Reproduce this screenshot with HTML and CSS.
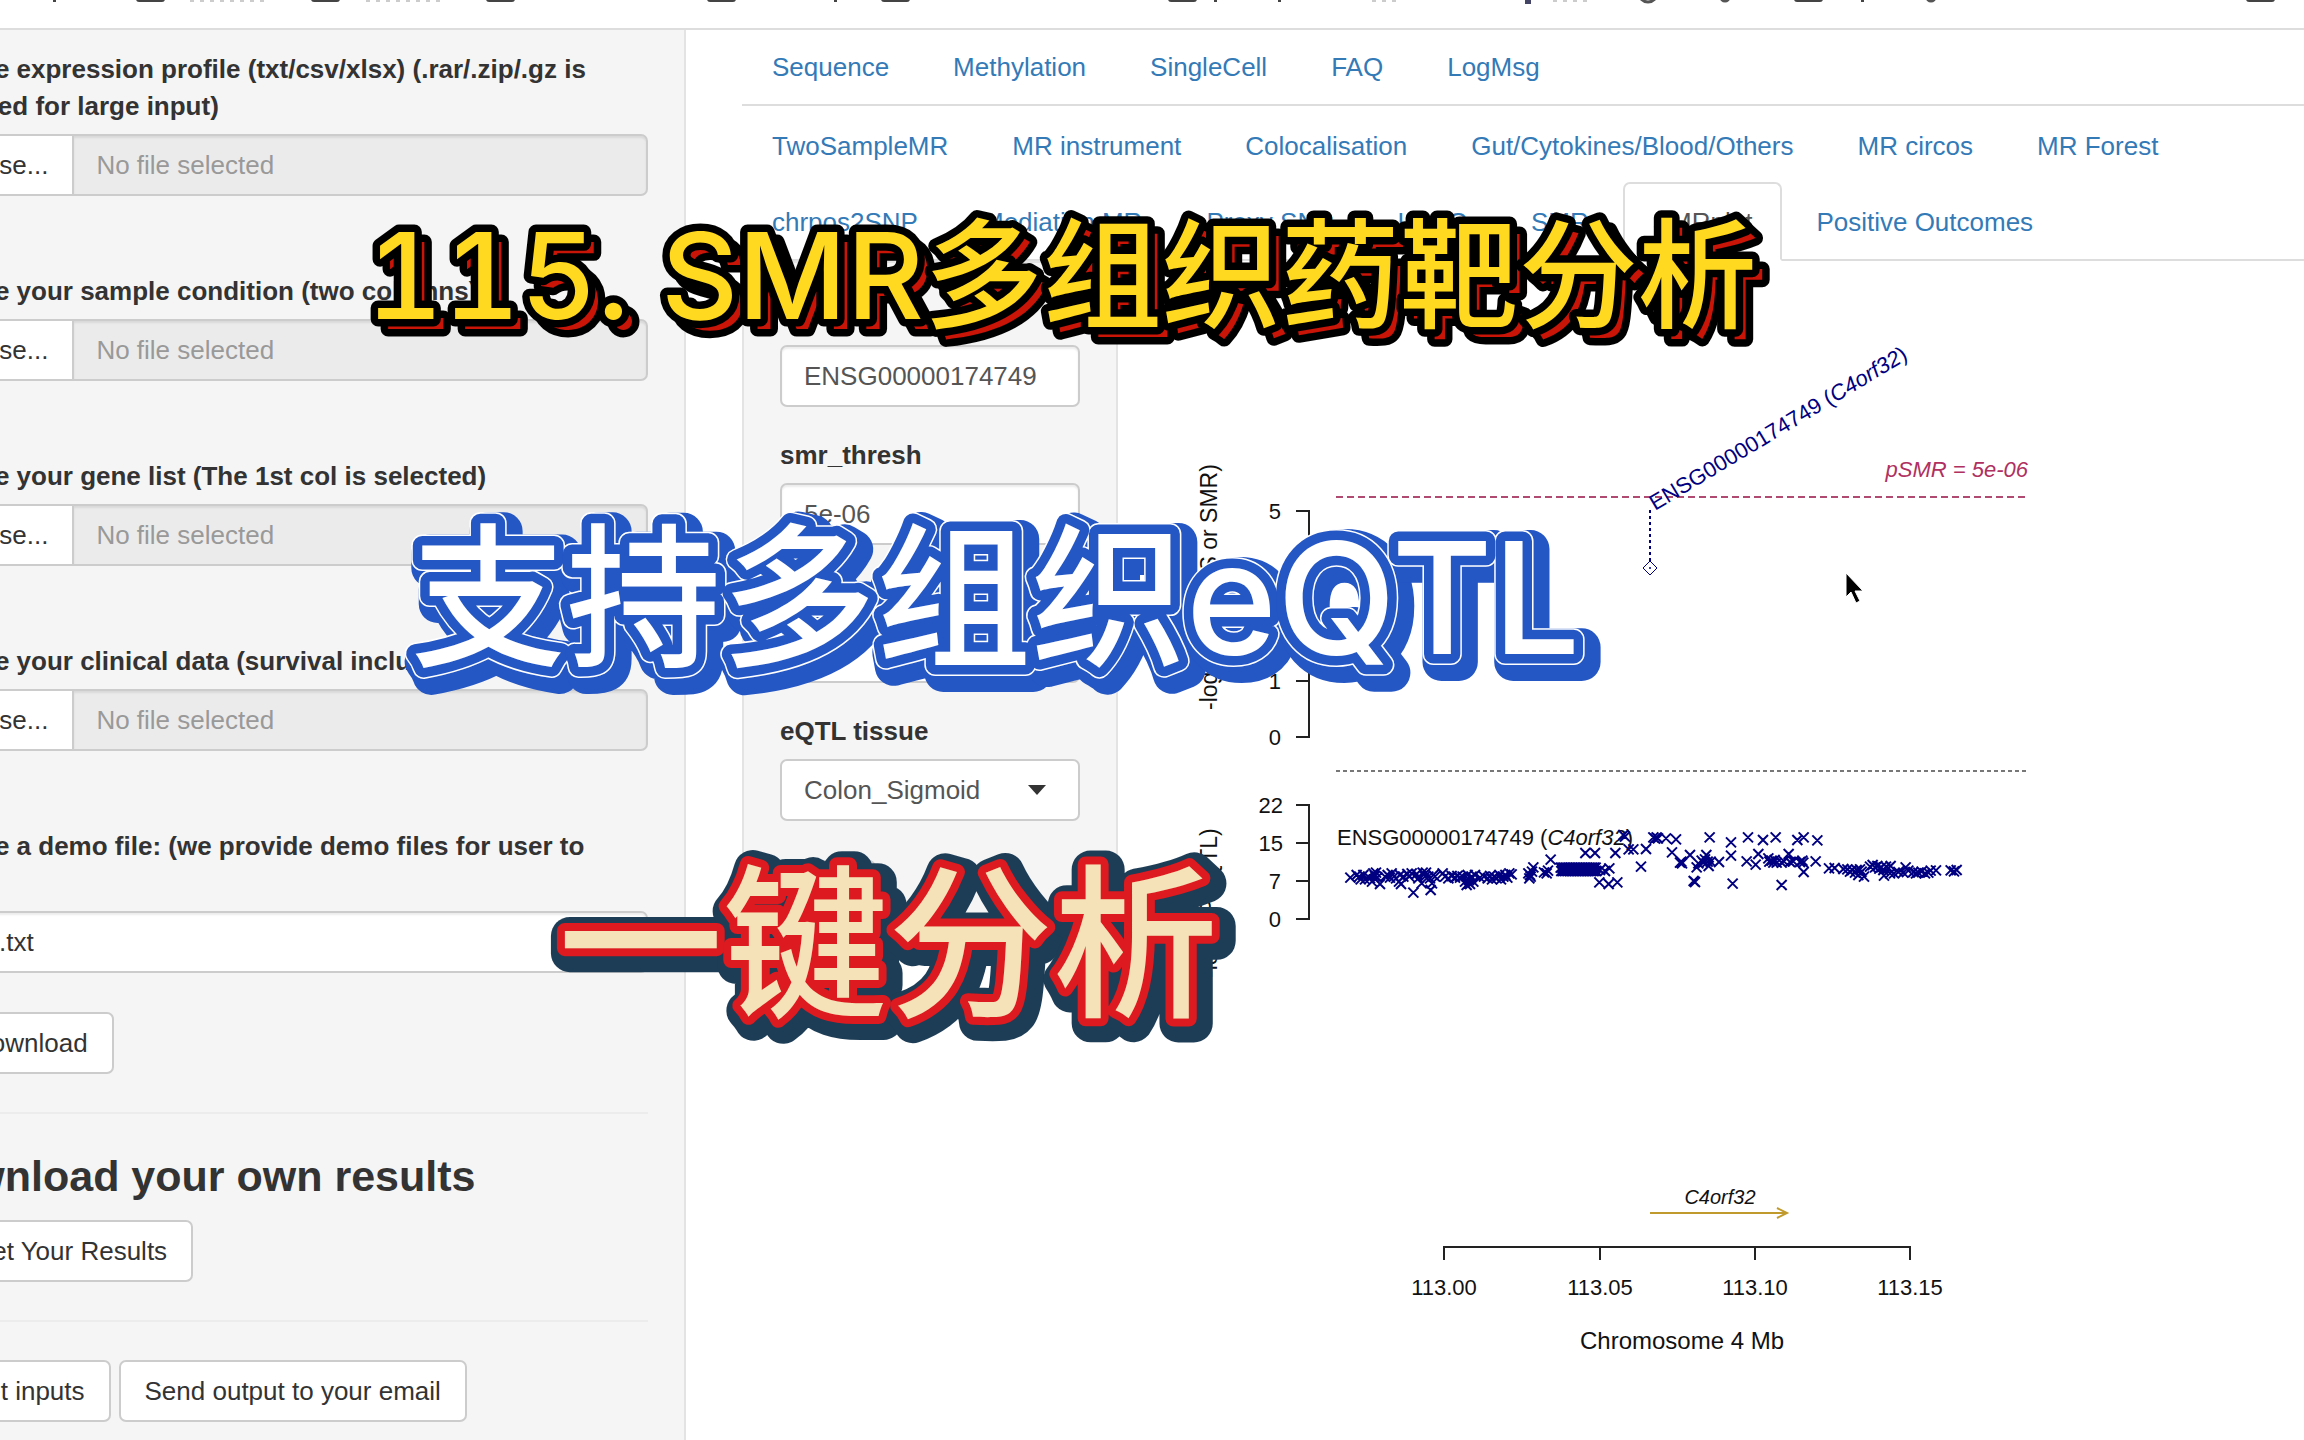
FILE: index.html
```html
<!DOCTYPE html>
<html lang="en">
<head>
  <meta charset="UTF-8" />
  <meta name="viewport" content="width=device-width, initial-scale=1.0"/>
  <title>SMR plot</title>
  <link rel="stylesheet" href="styles.css">
</head>
<body>

  <header class="bookmarks">
    <svg class="bookmark-icons" width="2304" height="4" aria-hidden="true">
      <g fill="#444">
        <rect x="136" y="-8" width="29" height="10" rx="3"/>
        <rect x="311" y="-8" width="29" height="10" rx="3"/>
        <rect x="486" y="-8" width="29" height="10" rx="3"/>
        <rect x="707" y="-8" width="29" height="10" rx="3"/>
        <rect x="881" y="-8" width="29" height="10" rx="3"/>
        <rect x="1168" y="-8" width="29" height="10" rx="3"/>
        <rect x="1794" y="-8" width="29" height="10" rx="3"/>
        <rect x="2246" y="-8" width="29" height="10" rx="3"/>
        <rect x="53" y="0" width="3" height="2"/>
        <rect x="834" y="0" width="3" height="2"/>
        <rect x="1214" y="0" width="3" height="2"/>
        <rect x="1278" y="0" width="3" height="2"/>
        <rect x="1861" y="0" width="3" height="2"/>
      </g>
      <g fill="none" stroke="#555" stroke-width="3">
        <circle cx="1648" cy="-7" r="9"/>
        <circle cx="1725" cy="-3" r="4"/>
        <circle cx="1931" cy="-3" r="4"/>
      </g>
      <rect x="1525" y="0" width="6" height="4" fill="#446"/>
      <path d="M190 1h75M366 1h75M1372 1h24M1553 1h34" stroke="#ccc" stroke-width="2" stroke-dasharray="4 6"/>
    </svg>
  </header>

  <div class="page">
    <aside class="sidebar">
      <div class="field">
        <label for="expr">Choose expression profile (txt/csv/xlsx) (.rar/.zip/.gz is<br>preferred for large input)</label>
        <div class="file-group">
          <button type="button" class="btn">Browse...</button>
          <input id="expr" type="text" placeholder="No file selected" readonly>
        </div>
      </div>
      <div class="field">
        <label for="cond">Choose your sample condition (two columns)</label>
        <div class="file-group">
          <button type="button" class="btn">Browse...</button>
          <input id="cond" type="text" placeholder="No file selected" readonly>
        </div>
      </div>
      <div class="field">
        <label for="genes">Choose your gene list (The 1st col is selected)</label>
        <div class="file-group">
          <button type="button" class="btn">Browse...</button>
          <input id="genes" type="text" placeholder="No file selected" readonly>
        </div>
      </div>
      <div class="field">
        <label for="clin">Choose your clinical data (survival included)</label>
        <div class="file-group">
          <button type="button" class="btn">Browse...</button>
          <input id="clin" type="text" placeholder="No file selected" readonly>
        </div>
      </div>
      <div class="field demo">
        <label for="demo">Choose a demo file: (we provide demo files for user to<br>test)</label>
        <input id="demo" class="control" type="text" value="demo.txt">
      </div>
      <button type="button" class="btn"><svg class="icon" viewBox="0 0 16 16"><path d="M8 1v9M4 7l4 4 4-4M1 14h14"/></svg>Download</button>
      <hr>
      <h3>Download your own results</h3>
      <button type="button" class="btn"><svg class="icon" viewBox="0 0 16 16"><path d="M8 1v9M4 7l4 4 4-4M1 14h14"/></svg>Get Your Results</button>
      <hr>
      <div class="actions">
        <button type="button" class="btn">Reset inputs</button>
        <button type="button" class="btn">Send output to your email</button>
      </div>
    </aside>

    <main class="main">
      <nav class="tabs">
        <a href="#sequence">Sequence</a>
        <a href="#methylation">Methylation</a>
        <a href="#singlecell">SingleCell</a>
        <a href="#faq">FAQ</a>
        <a href="#logmsg">LogMsg</a>
      </nav>
      <nav class="tabs sub">
        <a href="#twosamplemr">TwoSampleMR</a>
        <a href="#instrument">MR instrument</a>
        <a href="#coloc">Colocalisation</a>
        <a href="#gut">Gut/Cytokines/Blood/Others</a>
        <a href="#circos">MR circos</a>
        <a href="#forest">MR Forest</a>
        <span class="break"></span>
        <a href="#chrpos">chrpos2SNP</a>
        <a href="#mediation">Mediation MR</a>
        <a href="#proxy">Proxy SNP</a>
        <a href="#ldsc">LDSC</a>
        <a href="#smr">SMR</a>
        <a href="#smrplot" class="active">SMRplot</a>
        <a href="#outcomes">Positive Outcomes</a>
      </nav>

      <div class="content">
        <form class="well">
          <div class="param">
            <label for="probe">&nbsp;</label>
            <input id="probe" class="control" type="text" value="ENSG00000174749" aria-label="Probe">
          </div>
          <div class="param">
            <label for="smr">smr_thresh</label>
            <input id="smr" class="control" type="text" value="5e-06">
          </div>
          <div class="param">
            <label for="heidi">&nbsp;</label>
            <input id="heidi" class="control" type="text" aria-label="Second threshold">
          </div>
          <div class="param">
            <label for="tissue">eQTL tissue</label>
            <select id="tissue" class="control">
              <option>Colon_Sigmoid</option>
            </select>
          </div>
          <button type="button" class="btn run" aria-label="Run"></button>
        </form>

        <svg class="plot" viewBox="1171 261 920 1120" role="img" aria-label="SMR plot for C4orf32">
          <!-- SMR panel -->
          <path class="axis" d="M1296 511H1309V737H1296M1296 568H1309M1296 624H1309M1296 681H1309"/>
          <g class="ticks end">
            <text x="1281" y="519">5</text>
            <text x="1281" y="689">1</text>
            <text x="1281" y="745">0</text>
          </g>
          <text class="ylab" transform="translate(1217 710) rotate(-90)">-log<tspan class="small" dy="5">10</tspan><tspan dy="-5">(</tspan><tspan class="it">P</tspan> GWAS or SMR)</text>
          <path d="M1336 497H2028" stroke="#b04a70" stroke-width="2" stroke-dasharray="7 4"/>
          <text class="psmr" x="2028" y="477">pSMR = 5e-06</text>
          <path d="M1650 510V562" stroke="#000080" stroke-width="2" stroke-dasharray="3 3"/>
          <path d="M1650 561l7 7-7 7-7-7z" fill="none" stroke="#000080" stroke-width="1"/>
          <circle cx="1650" cy="568" r="1" fill="#000080"/>
          <text class="gene" transform="translate(1655 511) rotate(-31)">ENSG00000174749 (<tspan class="it">C4orf32</tspan>)</text>

          <path d="M1336 771H2028" stroke="#777" stroke-width="2" stroke-dasharray="4 3"/>

          <!-- eQTL panel -->
          <path class="axis" d="M1296 805H1309V919H1296M1296 843H1309M1296 881H1309"/>
          <g class="ticks end">
            <text x="1283" y="813">22</text>
            <text x="1283" y="851">15</text>
            <text x="1281" y="889">7</text>
            <text x="1281" y="927">0</text>
          </g>
          <text class="ylab" transform="translate(1217 978) rotate(-90)">-log<tspan class="small" dy="5">10</tspan><tspan dy="-5">(</tspan><tspan class="it">P</tspan> eQTL)</text>
          <text class="ticks" x="1337" y="845">ENSG00000174749 (<tspan class="it">C4orf32</tspan>)</text>
          <path id="points" class="points"/>

          <!-- gene track -->
          <text class="track it" x="1720" y="1204">C4orf32</text>
          <path d="M1650 1213H1786M1777 1208L1787 1213L1777 1218" fill="none" stroke="#c09a2c" stroke-width="2"/>
          <path class="axis" d="M1444 1260V1247H1910V1260M1600 1247V1260M1755 1247V1260"/>
          <g class="ticks mid">
            <text x="1444" y="1295">113.00</text>
            <text x="1600" y="1295">113.05</text>
            <text x="1755" y="1295">113.10</text>
            <text x="1910" y="1295">113.15</text>
          </g>
          <text class="xlab" x="1682" y="1349">Chromosome 4 Mb</text>

          <!-- pointer -->
          <path d="M1846 573v24l5-5 5 11 4-2-5-10h8z" fill="#000" stroke="#fff" stroke-width="1"/>
        </svg>
      </div>
    </main>
  </div>

  <svg class="captions" viewBox="0 0 2304 1440" role="img" aria-label="captions">
    <defs>
      <text id="cap1" class="cap cap1" x="366" y="319">115. SMR多组织药靶分析</text>
      <text id="cap2" class="cap cap2" x="411" y="654">支持多组织eQTL</text>
      <text id="cap3" class="cap cap3" x="558" y="1004">一键分析</text>
    </defs>

    <g class="c1">
      <use href="#cap1" x="10" y="10" class="edge"/>
      <use href="#cap1" x="10" y="10" fill="#c91408"/>
      <use href="#cap1" class="edge"/>
      <use href="#cap1" fill="#ffd91f"/>
    </g>
    <g class="c2">
      <use href="#cap2" x="8" y="8" class="deep"/>
      <use href="#cap2" class="line"/>
      <use href="#cap2" class="edge"/>
      <use href="#cap2" fill="#fff"/>
    </g>
    <g class="c3">
      <use href="#cap3" x="5" y="5" class="deep"/>
      <use href="#cap3" class="edge"/>
      <use href="#cap3" fill="#f5e2b8"/>
    </g>
  </svg>

  <script>
    // SNP positions in thirds of a pixel, relative to (1320, 810)
    const snps = [
      [91,203],[110,195],[118,200],[122,208],[130,195],[135,208],[145,200],[150,205],[156,215],[160,190],
      [165,198],[168,188],[172,202],[180,222],[195,200],[203,195],[210,203],[215,190],[222,200],[228,205],
      [237,215],[240,195],[243,222],[250,200],[262,192],[268,200],[275,190],[280,248],[290,192],[295,205],
      [305,220],[308,188],[315,200],[318,188],[325,200],[330,205],[332,240],[336,220],[340,195],[345,200],
      [368,190],[375,200],[385,205],[395,198],[405,203],[412,198],[420,203],[428,200],[435,215],[440,225],
      [443,195],[447,210],[450,222],[455,200],[460,215],[465,195],[480,203],[492,200],[503,205],[510,198],
      [516,208],[522,200],[530,205],[538,195],[543,208],[550,200],[556,195],[562,203],[568,190],[575,193],
      [625,190],[628,205],[630,195],[632,200],[640,172],[636,185],[672,187],[680,190],[684,182],[692,149],
      [840,180],[855,183],[868,175],[838,217],[866,222],[892,217],[796,129],[825,129],[886,129],[910,75],
      [915,80],[926,118],[940,118],[978,117],[963,170],
      [1000,82],[1005,86],[1010,82],[1014,85],[1038,85],[1068,88],[1169,82],[1233,97],[1284,82],[1329,90],
      [1367,82],[1432,90],[1451,82],[1492,91],[1056,127],[1080,158],[1084,155],[1086,160],[1110,135],[1121,213],
      [1125,216],[1130,172],[1135,160],[1145,152],[1150,158],[1155,148],[1159,135],[1163,155],[1166,168],[1172,155],
      [1197,156],[1233,137],[1238,221],[1280,154],[1307,164],[1315,132],[1385,225],[1345,145],[1348,155],[1355,152],
      [1360,158],[1364,150],[1370,158],[1385,158],[1392,154],[1406,132],[1410,156],[1420,154],[1440,156],[1447,152],
      [1450,158],[1487,154],[1451,186],[1527,175],[1544,174],[1570,177],[1582,178],[1590,185],[1597,180],[1605,188],
      [1610,180],[1615,195],[1620,178],[1625,185],[1632,200],[1650,170],[1658,165],[1665,172],[1672,168],[1678,176],
      [1684,172],[1690,180],[1692,197],[1698,170],[1704,175],[1712,168],[1710,190],[1722,190],[1735,186],[1750,188],
      [1757,172],[1765,182],[1780,186],[1788,190],[1795,188],[1805,185],[1815,190],[1825,188],[1832,182],[1848,181],
      [1892,181],[1902,184],[1910,180]
    ];

    // dense block in the middle of the locus
    for (let x = 722; x < 832; x += 5) {
      snps.push([x, 173], [x + 2, 183]);
    }

    // one subpath pair per mark, so overlapping marks stay readable
    document.getElementById('points').setAttribute('d', snps.map(([x, y]) => {
      const cx = 1320 + x / 3;
      const cy = 810 + y / 3;
      return `M${cx - 5} ${cy - 5}l10 10m0 -10l-10 10`;
    }).join(''));
  </script>

</body>
</html>
```
FILE: styles.css
```css
:root {
  --text: #333;
  --link: #337ab7;
  --panel: #f5f5f5;
  --border: #ccc;
  --line: #ddd;
}

* {
  box-sizing: border-box;
}

body {
  margin: 0;
  position: relative;
  min-height: 100vh;
  overflow: hidden;
  background: #fff;
  color: var(--text);
  font-family: "Liberation Sans", Arial, sans-serif;
  font-size: 26px;
  line-height: 37px;
}

.bookmarks {
  height: 30px;
  border-bottom: 2px solid var(--line);
  overflow: hidden;
}

.bookmark-icons {
  display: block;
}

.page {
  display: flex;
  min-height: calc(100vh - 30px);
}

/* sidebar is scrolled partly out of view on the left */
.sidebar {
  flex: none;
  width: 808px;
  margin-left: -122px;
  padding: 21px 36px 0;
  background: var(--panel);
  border-right: 2px solid #e3e3e3;
}

label {
  display: block;
  font-weight: bold;
  margin-bottom: 9px;
}

.field {
  margin-bottom: 77px;
}

.field.demo {
  margin-bottom: 39px;
}

.file-group {
  display: flex;
}

.file-group .btn {
  border-radius: 7px 0 0 7px;
}

.file-group input {
  flex: 1;
  min-width: 0;
  margin-left: -2px;
  border-radius: 0 7px 7px 0;
  background: #ebebeb;
}

.file-group input::placeholder {
  color: #999;
}

.control,
.file-group input {
  height: 62px;
  padding: 0 22px;
  border: 2px solid var(--border);
  font: inherit;
  color: #555;
  box-shadow: inset 0 2px 2px rgba(0,0,0,0.08);
}

.control {
  display: block;
  width: 100%;
  border-radius: 7px;
  background: #fff;
}

#demo {
  padding-left: 18px;
  color: var(--text);
}

select.control {
  appearance: none;
  box-shadow: none;
  background: #fff url("data:image/svg+xml,%3Csvg xmlns='http://www.w3.org/2000/svg' viewBox='0 0 18 10'%3E%3Cpath d='M0 0h18l-9 10z' fill='%23333'/%3E%3C/svg%3E") no-repeat right 32px center / 18px 10px;
}

.btn {
  height: 62px;
  padding: 0 24px;
  border: 2px solid var(--border);
  border-radius: 7px;
  background: #fff;
  color: var(--text);
  font: inherit;
  white-space: nowrap;
}

.icon {
  width: 26px;
  height: 24px;
  margin-right: 6px;
  vertical-align: -3px;
  fill: none;
  stroke: var(--text);
  stroke-width: 2;
}

hr {
  margin: 38px 0;
  border: 0;
  border-top: 2px solid #ececec;
}

h3 {
  margin: 0 0 20px;
  font-size: 43px;
  line-height: 48px;
}

.actions {
  display: flex;
  gap: 8px;
}

.main {
  flex: 1;
  min-width: 0;
  margin-left: 56px;
}

.tabs {
  display: flex;
  flex-wrap: wrap;
  align-content: flex-start;
  gap: 0 4px;
  height: 76px;
  border-bottom: 2px solid var(--line);
}

.tabs a {
  height: 76px;
  padding: 17px 28px;
  border: 2px solid transparent;
  border-radius: 7px 7px 0 0;
  color: var(--link);
  text-decoration: none;
}

.tabs.sub {
  height: 155px;
}

.tabs.sub a {
  padding-top: 20px;
}

.tabs .break {
  flex-basis: 100%;
}

.tabs a.active {
  height: 79px;
  border-color: var(--line);
  border-bottom-color: #fff;
  background: #fff;
  color: #555;
}

.content {
  display: flex;
  align-items: flex-start;
  gap: 53px;
}

.well {
  width: 376px;
  padding: 36px;
  border: 2px solid #e3e3e3;
  border-radius: 7px;
  background: var(--panel);
}

.param {
  margin-bottom: 30px;
}

.run {
  display: block;
  width: 96px;
  margin-top: 39px;
}

.plot {
  flex: 0 1 920px;
  min-width: 0;
  font-size: 22px;
}

.axis {
  fill: none;
  stroke: #222;
  stroke-width: 2;
}

.points {
  fill: none;
  stroke: #000080;
  stroke-width: 1;
}

.ticks,
.xlab,
.ylab {
  fill: #111;
}

.end {
  text-anchor: end;
}

.mid {
  text-anchor: middle;
}

.ylab {
  font-size: 23px;
}

.small {
  font-size: 15px;
}

.it {
  font-style: italic;
}

.psmr {
  fill: #b03060;
  font-style: italic;
  text-anchor: end;
}

.gene {
  fill: #000080;
}

.points {
  stroke-width: 2;
}

.track {
  fill: #111;
  font-size: 20px;
  text-anchor: middle;
}

.xlab {
  font-size: 24px;
  text-anchor: middle;
}

/* captions lie over the whole page */
.captions {
  position: absolute;
  top: 0;
  left: 0;
  width: 100%;
  pointer-events: none;
}

.cap {
  font-family: Inter, "Noto Sans CJK SC", sans-serif;
  font-weight: 500;
  stroke-linejoin: round;
}

.cap1 {
  font-size: 119px;
  font-variant-numeric: tabular-nums;
}

.cap2 {
  font-size: 155px;
}

.cap3 {
  font-size: 165px;
}

.c1 .edge {
  stroke: #000;
  stroke-width: 15px;
}

.c2 .deep {
  fill: #2456c4;
  stroke: #2456c4;
  stroke-width: 38px;
}

.c2 .line {
  stroke: #fff;
  stroke-width: 22px;
}

.c2 .edge {
  stroke: #2456c4;
  stroke-width: 19px;
}

.c3 .deep {
  fill: #1d3c55;
  stroke: #1d3c55;
  stroke-width: 38px;
}

.c3 .edge {
  stroke: #dc1a1f;
  stroke-width: 16px;
}
```
